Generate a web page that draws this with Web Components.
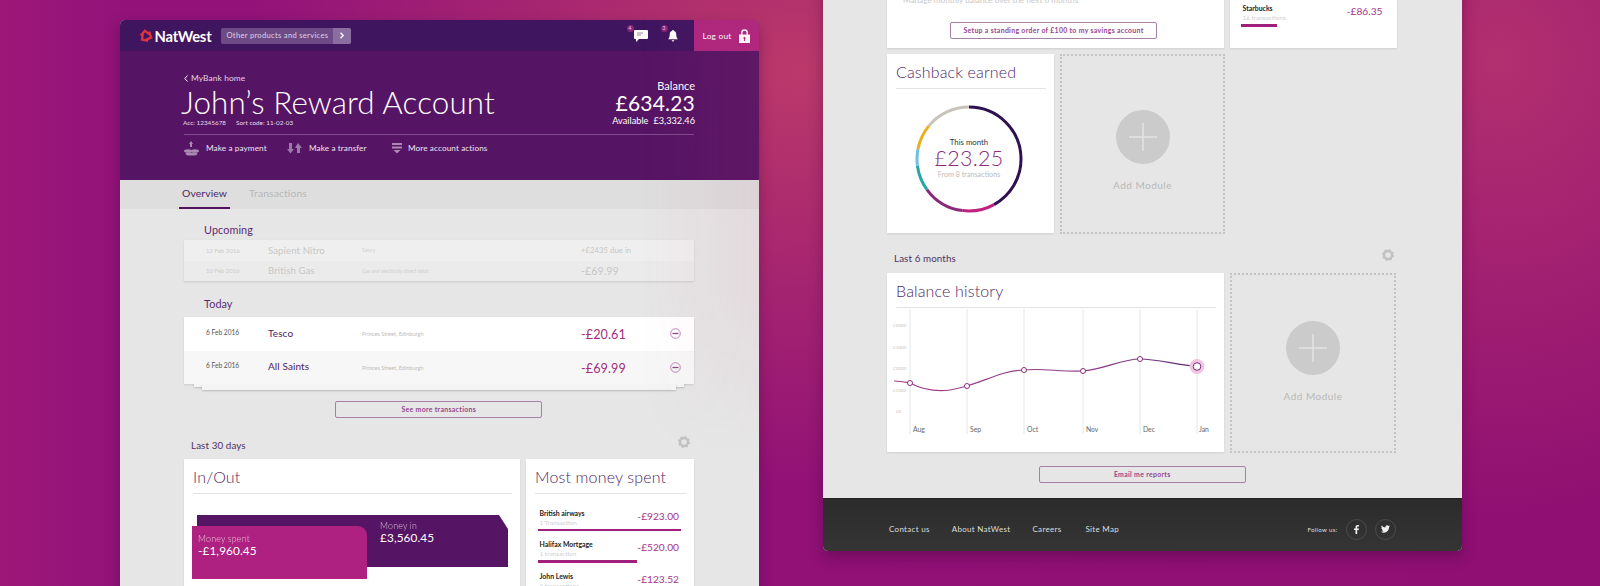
<!DOCTYPE html>
<html lang="en">
<head>
<meta charset="utf-8">
<title>NatWest reward account</title>
<style>
  html, body { margin: 0; height: 586px; overflow: hidden; }
  body {
    font-family: Lato, "Open Sans", sans-serif;
    background:
      radial-gradient(ellipse 560px 420px at 800px 70px, rgba(190,60,105,.92), rgba(190,60,105,0) 100%),
      radial-gradient(ellipse 420px 460px at 1500px 60px, rgba(190,58,110,.75), rgba(190,58,110,0) 100%),
      linear-gradient(90deg, #9c1778, #92127a 8%, #8f0f72 100%);
  }
  nw-stage > nw-window:first-child { margin-top: 20px; }
</style>
</head>
<body>

<nw-stage>
  <nw-window style="--w:639px">
    <nw-topbar></nw-topbar>
    <nw-account-header></nw-account-header>
    <nw-tabs></nw-tabs>
    <nw-content style="--pt:12px;--pr:65px">
      <nw-heading style="--ml:20px">Upcoming</nw-heading>
      <nw-tx-list muted>
        <nw-tx-row muted date="12 Feb 2016" name="Sapient Nitro" desc="Salary" amount="+£2435 due in" small></nw-tx-row>
        <nw-tx-row muted alt date="10 Feb 2016" name="British Gas" desc="Gas and electricity direct debit" amount="-£69.99"></nw-tx-row>
      </nw-tx-list>
      <nw-heading style="--ml:20px;--mt:14px">Today</nw-heading>
      <nw-tx-list stacked>
        <nw-tx-row date="6 Feb 2016" name="Tesco" desc="Princes Street, Edinburgh" amount="-£20.61" action></nw-tx-row>
        <nw-tx-row alt date="6 Feb 2016" name="All Saints" desc="Princes Street, Edinburgh" amount="-£69.99" action></nw-tx-row>
      </nw-tx-list>
      <nw-button style="--mt:17px">See more transactions</nw-button>
      <nw-heading settings small style="--ml:7px;--mt:21px;--mr:4px;--mb:8px">Last 30 days</nw-heading>
      <nw-row>
        <nw-card heading="In/Out" style="--w:336px;--h:160px"><nw-inout></nw-inout></nw-card>
        <nw-card heading="Most money spent" style="--w:167.5px;--h:160px">
          <nw-spend first name="British airways" count="1 Transaction" amount="-£923.00" pct="100"></nw-spend>
          <nw-spend name="Halifax Mortgage" count="1 transaction" amount="-£520.00" pct="69"></nw-spend>
          <nw-spend name="John Lewis" count="4 transactions" amount="-£123.52" pct="40"></nw-spend>
        </nw-card>
      </nw-row>
    </nw-content>
  </nw-window>

  <nw-window bottom style="--w:639px">
    <nw-content style="--pb:15px">
      <nw-row>
        <nw-card plain style="--w:337px;--h:88px">
          <nw-advice>Manage monthly balance over the next 6 months</nw-advice>
          <nw-button style="--mt:0;--bw:207px;--bh:17px;--shift:4px">Setup a standing order of £100 to my savings account</nw-button>
        </nw-card>
        <nw-card plain style="--w:167px;--h:88px">
          <nw-spend tail name="Starbucks" count="16 transactions" amount="-£86.35" pct="25"></nw-spend>
        </nw-card>
      </nw-row>
      <nw-row style="--mt:6px">
        <nw-card heading="Cashback earned" style="--w:167px;--h:179px"><nw-cashback></nw-cashback></nw-card>
        <nw-add-module style="--w:165px;--h:180px;--pt:54px"></nw-add-module>
      </nw-row>
      <nw-heading settings small style="--ml:7px;--mt:18px;--mr:4px;--mb:9px">Last 6 months</nw-heading>
      <nw-row>
        <nw-card heading="Balance history" style="--w:337px;--h:179px"><nw-balance-chart></nw-balance-chart></nw-card>
        <nw-add-module style="--w:166px;--h:180px;--pt:46px"></nw-add-module>
      </nw-row>
      <nw-button style="--mt:13px">Email me reports</nw-button>
    </nw-content>
    <nw-footer></nw-footer>
  </nw-window>
</nw-stage>

<script>
// tiny base class, most of these elements are just a static shadow root
class NwElement extends HTMLElement {
  constructor() {
    super();
    this.attachShadow({ mode: 'open' });
  }
  connectedCallback() {
    this.shadowRoot.innerHTML = this.render();
  }
  attr(name) {
    return this.getAttribute(name) || '';
  }
}

const GEAR = `<svg width="12" height="12" viewBox="0 0 24 24"><circle cx="12" cy="12" r="8" fill="none" stroke="#c2c2c2" stroke-width="5"/><circle cx="12" cy="12" r="10.5" fill="none" stroke="#c2c2c2" stroke-width="3" stroke-dasharray="4 4.25"/></svg>`;

class NwStage extends NwElement {
  render() {
    return `<style>
      :host { display: flex; height: 586px; overflow: hidden; padding-left: 119.5px; gap: 64px; box-sizing: border-box; }
    </style><slot></slot>`;
  }
}

class NwWindow extends NwElement {
  render() {
    const sheen = this.hasAttribute('bottom') ? '' : '<div class="sheen"></div>';
    return `<style>
      :host {
        display: block; position: relative; flex: none; width: var(--w); align-self: flex-start;
        border-radius: 5px; overflow: hidden; background: #e6e6e6;
        box-shadow: 0 6px 14px rgba(50,0,50,.35);
      }
      :host([bottom]) { align-self: flex-end; margin-bottom: 35px; border-radius: 0 0 5px 5px; }
      .sheen {
        position: absolute; inset: 0 0 0 auto; width: 120px; pointer-events: none;
        background: linear-gradient(180deg, rgba(200,70,110,.08), rgba(200,70,110,.07) 45%, rgba(200,70,110,0) 72%);
        -webkit-mask-image: linear-gradient(90deg, transparent, #000);
        mask-image: linear-gradient(90deg, transparent, #000);
      }
    </style><slot></slot>${sheen}`;
  }
}

class NwTopbar extends NwElement {
  render() {
    return `<style>
      :host { display: flex; align-items: center; height: 31px; background: #3f1560; color: #fff; position: relative; }
      .logo { display: flex; align-items: center; margin-left: 19px; gap: 2px; font-size: 14.8px; font-weight: 700; letter-spacing: -.2px; width: 82px; }
      .more { display: flex; height: 16px; width: 130px; border-radius: 2px; background: #6d4a86; font-size: 7.6px; letter-spacing: .3px; color: #dcd3e2; overflow: hidden; }
      .more span { flex: 1; padding-left: 6px; line-height: 15px; white-space: nowrap; }
      .more b { width: 18px; background: #8a6ea0; display: flex; align-items: center; justify-content: center; }
      .icons { margin-left: auto; display: flex; gap: 20px; margin-right: 16px; }
      .ic { position: relative; display: flex; }
      .ic i { position: absolute; left: -7px; top: -5px; width: 7px; height: 7px; line-height: 7px; border-radius: 50%; background: #8a2473; font: 5px Lato, sans-serif; text-align: center; color: #e9cfe4; }
      .logout { display: flex; align-items: center; width: 65px; height: 100%; box-sizing: border-box; padding-left: 9px; gap: 7px; background: #ae267f; font-size: 8.4px; letter-spacing: .2px; }
    </style>
    <div class="logo">
      <svg width="14" height="14" viewBox="-12 -12 24 24" fill="none" stroke="#e0343c" stroke-width="4">
        <path d="M-9 -1L-2 -9L6 -3"/><path d="M-9 -1L-2 -9L6 -3" transform="rotate(120)"/><path d="M-9 -1L-2 -9L6 -3" transform="rotate(240)"/>
      </svg>
      NatWest
    </div>
    <div class="more"><span>Other products and services</span><b><svg width="6" height="7" viewBox="0 0 6 7"><path d="M1.500 .8L4.200 3.500 1.500 6.200" fill="none" stroke="#fff" stroke-width="1.300"/></svg></b></div>
    <div class="icons">
      <div class="ic"><i>4</i><svg width="14" height="12" viewBox="0 0 14 12"><path d="M1 0h12a1 1 0 0 1 1 1v7a1 1 0 0 1-1 1H5l-3 3V9H1a1 1 0 0 1-1-1V1a1 1 0 0 1 1-1z" fill="#fff"/><path d="M3 3h6M3 5h4" stroke="#9a86a8" stroke-width="1"/></svg></div>
      <div class="ic"><i>3</i><svg width="10" height="12" viewBox="0 0 10 12"><path d="M5 0a1 1 0 0 1 1 1.100C8 1.600 8.300 3.400 8.300 5c0 2 .6 3.300 1.700 4.300H0C1.100 8.300 1.700 7 1.700 5c0-1.600.3-3.400 2.300-3.900A1 1 0 0 1 5 0z" fill="#fff"/><path d="M3.700 10.200h2.600a1.300 1.300 0 0 1-2.600 0z" fill="#fff"/></svg></div>
    </div>
    <div class="logout">Log out <svg width="11" height="14" viewBox="0 0 11 14"><path d="M2.800 6V3.700a2.700 2.700 0 0 1 5.400 0V6" fill="none" stroke="#fff" stroke-width="1.400"/><path d="M0 5.500h11V14H0z" fill="#fff"/><path d="M5.500 8a1 1 0 0 1 .5 1.900V12H5V9.900A1 1 0 0 1 5.500 8z" fill="#ae267f"/></svg></div>`;
  }
}

class NwAccountHeader extends NwElement {
  render() {
    return `<style>
      :host { display: block; height: 129px; box-sizing: border-box; padding: 21px 65px 0 64.5px; background: #561464; color: #fff; }
      .back { font-size: 8.4px; color: #e2d3e6; height: 13px; line-height: 13px; display: flex; align-items: center; gap: 3px; letter-spacing: .1px; }
      .main { display: flex; justify-content: space-between; height: 49px; }
      h1 { margin: -1px 0 0 -3px; font-size: 31.4px; font-weight: 300; line-height: 36px; letter-spacing: .1px; white-space: nowrap; }
      .acc { font-size: 6.3px; line-height: 9px; display: flex; gap: 10px; color: #eadfee; margin: -2px 0 0 -1px; letter-spacing: .04px; }
      .bal { text-align: right; margin: -6px -1.500px 0 0; }
      .bal div:nth-child(1) { font-size: 11px; line-height: 13px; }
      .bal div:nth-child(2) { font-size: 21px; line-height: 22px; letter-spacing: .2px; }
      .bal div:nth-child(3) { font-size: 9.2px; line-height: 12px; display: flex; justify-content: flex-end; gap: 5px; margin-top: 1px; }
      hr { border: 0; border-top: 1px solid #7c4d8a; margin: 0; }
      .actions { display: flex; align-items: center; height: 26px; font-size: 8.2px; color: #eee4f0; letter-spacing: .1px; }
      .actions span { display: flex; align-items: center; white-space: nowrap; }
      .actions svg { flex: none; }
    </style>
    <div class="back"><svg width="4" height="7" viewBox="0 0 4 7"><path d="M3.500 .5L.8 3.500 3.500 6.500" fill="none" stroke="#fff" stroke-width="1"/></svg> MyBank home</div>
    <div class="main">
      <div><h1>John’s Reward Account</h1><div class="acc"><span>Acc: 12345678</span><span>Sort code: 11-02-03</span></div></div>
      <div class="bal"><div>Balance</div><div>£634.23</div><div><span>Available</span><span>£3,332.46</span></div></div>
    </div>
    <hr>
    <div class="actions">
      <span style="width:103px"><svg width="15" height="15" viewBox="0 0 15 15" style="margin-right:7px" fill="#a98bb2"><path d="M7 0l2 3H8v3H6V3H5z"/><ellipse cx="4" cy="10" rx="4" ry="1.800"/><ellipse cx="11" cy="10" rx="4" ry="1.800"/><ellipse cx="7.500" cy="13" rx="6" ry="1.600"/></svg>Make a payment</span>
      <span style="width:105px"><svg width="15" height="11" viewBox="0 0 15 11" style="margin-right:7px" fill="#9a7aa6"><path d="M2 0h3v6h2L3.500 10.500 0 6h2z"/><path d="M11 0l4 5h-2v5h-3V5H8z"/></svg>Make a transfer</span>
      <span><svg width="10" height="11" viewBox="0 0 10 11" style="margin-right:6px" fill="#a98bb2"><path d="M0 0h10v2H0zM0 3.500h10v2H0zM1.500 7h7L5 10.500z"/></svg>More account actions</span>
    </div>`;
  }
}

class NwTabs extends NwElement {
  render() {
    return `<style>
      :host { display: flex; height: 29px; background: #dedede; padding-left: 59px; font-size: 10.4px; letter-spacing: .1px; }
      div { padding: 0 3.500px; line-height: 27px; height: 27px; }
      .on { color: #4c2560; border-bottom: 2px solid #50145e; width: 44px; }
      .off { color: #b7b7b7; margin-left: 16px; }
    </style><div class="on">Overview</div><div class="off">Transactions</div>`;
  }
}

class NwContent extends NwElement {
  render() {
    return `<style>
      :host { display: block; padding: var(--pt, 0) var(--pr, 64px) var(--pb, 0) 64.5px; }
    </style><slot></slot>`;
  }
}

class NwHeading extends NwElement {
  render() {
    return `<style>
      :host { display: flex; justify-content: space-between; align-items: center; height: 17px; margin: var(--mt, 0) var(--mr, 0) var(--mb, 0) var(--ml, 0); color: #5a2a70; font-size: 10.8px; letter-spacing: .1px; }
      :host([small]) { font-size: 9.8px; height: 12px; color: #50305f; }
      svg { margin-top: -6px; }
    </style><span><slot></slot></span>${this.hasAttribute('settings') ? GEAR : ''}`;
  }
}

class NwTxList extends NwElement {
  render() {
    return `<style>
      :host { display: block; margin-top: 2px; position: relative; box-shadow: 0 1px 2px rgba(0,0,0,.12); }
      :host([stacked]) { margin-top: 5px; margin-bottom: 5px; }
      .l1, .l2 { position: absolute; background: #f4f4f4; box-shadow: 0 1px 2px rgba(0,0,0,.2); z-index: -1; }
      .l1 { left: 10px; right: 10px; bottom: -3px; height: 6px; }
      .l2 { left: 18px; right: 18px; bottom: -6px; height: 6px; }
      .wrap { position: relative; isolation: isolate; }
    </style><div class="wrap">${this.hasAttribute('stacked') ? '<div class="l1"></div><div class="l2"></div>' : ''}<slot></slot></div>`;
  }
}

class NwTxRow extends NwElement {
  render() {
    const action = this.hasAttribute('action')
      ? `<svg width="11" height="11" viewBox="0 0 11 11"><circle cx="5.500" cy="5.500" r="4.800" fill="none" stroke="#b06aa4" stroke-width=".8"/><path d="M2.500 5.500h6" stroke="#8b4a88" stroke-width="1.300"/></svg>`
      : '';
    return `<style>
      :host { display: grid; grid-template-columns: 62px 94px 219px 89px 11px; align-items: center; height: 33.500px; padding-left: 22px; background: #fff; }
      :host([alt]) { background: #f7f7f7; }
      :host([muted]) { height: 20.5px; background: #efefef; }
      :host([muted][alt]) { background: #ebebeb; }
      .d { font-size: 6.6px; color: #555; margin-top: -4px; }
      .n { font-size: 10px; color: #4f2260; margin-top: -2px; letter-spacing: .1px; }
      .s { font-size: 5.6px; color: #bdbdbd; }
      .a { font-size: 12.6px; color: #a0307e; margin-top: 2px; letter-spacing: .1px; }
      :host([muted]) .d { font-size: 6px; color: #cbcbcb; margin: 0; }
      :host([muted]) .n { font-size: 9.6px; color: #c7c7c7; margin: 0; }
      :host([muted]) .s { font-size: 5px; color: #d0d0d0; }
      :host([muted]) .a { font-size: 10.6px; color: #c7c7c7; margin: 0; }
      :host([small]) .a { font-size: 7.6px; }
    </style>
    <div class="d">${this.attr('date')}</div><div class="n">${this.attr('name')}</div><div class="s">${this.attr('desc')}</div><div class="a">${this.attr('amount')}</div>${action}`;
  }
}

class NwButton extends NwElement {
  render() {
    return `<style>
      :host { display: flex; justify-content: center; margin-top: var(--mt, 0); padding-right: var(--shift, 0); }
      div { width: var(--bw, 207px); height: var(--bh, 17px); box-sizing: border-box; border: 1px solid #a680a6; border-radius: 2px; text-align: center; font-size: 6.9px; line-height: 14px; letter-spacing: .32px; font-weight: 700; color: #96458c; white-space: nowrap; }
    </style><div><slot></slot></div>`;
  }
}

class NwRow extends NwElement {
  render() {
    return `<style>
      :host { display: flex; gap: 6px; margin-top: var(--mt, 0); align-items: flex-start; }
    </style><slot></slot>`;
  }
}

class NwCard extends NwElement {
  render() {
    const heading = this.attr('heading');
    return `<style>
      :host { display: flex; flex-direction: column; flex: none; width: var(--w); height: var(--h); background: #fff; box-shadow: 0 1px 2px rgba(0,0,0,.1); box-sizing: border-box; overflow: hidden; }
      h2 { margin: 0 8px 0 9px; height: 35px; line-height: 36px; box-sizing: border-box; font-size: 16px; font-weight: 300; color: #4f1f66; letter-spacing: .15px; border-bottom: 1px solid #e3e3e3; white-space: nowrap; }
      .body { flex: 1; position: relative; }
    </style>${heading ? `<h2>${heading}</h2>` : ''}<div class="body"><slot></slot></div>`;
  }
}

class NwInout extends NwElement {
  render() {
    return `<style>
      :host { display: block; position: relative; height: 120px; color: #fff; }
      .in, .out { position: absolute; box-sizing: border-box; }
      .in { left: 13px; top: 21px; width: 311px; height: 52px; background: #561464; clip-path: polygon(0 0, 302px 0, 311px 14px, 311px 100%, 0 100%); padding: 5px 0 0 183px; }
      .out { left: 8px; top: 32px; width: 175px; height: 53px; background: #ae2180; border-radius: 0 9px 0 0; padding: 7px 0 0 6px; }
      .l { font-size: 8.8px; line-height: 11px; opacity: .7; font-weight: 300; letter-spacing: .2px; }
      .v { font-size: 11.8px; line-height: 14px; letter-spacing: .1px; }
    </style>
    <div class="in"><div class="l">Money in</div><div class="v">£3,560.45</div></div>
    <div class="out"><div class="l">Money spent</div><div class="v">-£1,960.45</div></div>`;
  }
}

class NwSpend extends NwElement {
  render() {
    return `<style>
      :host { display: block; height: 31.500px; box-sizing: border-box; margin: 0 12.500px 0 11.500px; padding-top: 8px; position: relative; }
      :host([first]) { margin-top: 6.500px; }
      :host([tail]) { padding-top: 44px; height: 80px; margin-left: 10.500px; }
      .top { display: flex; justify-content: space-between; padding: 0 2px; }
      .n { font-size: 6.9px; color: #222; font-weight: 700; line-height: 9px; }
      .c { font-size: 6.4px; color: #cfcfcf; line-height: 9px; }
      .a { font-size: 10.2px; color: #a8338a; margin-top: 1px; }
      .bar { height: 2.500px; background: #a0207a; margin-top: 2px; width: calc(var(--pct) * 1%); }
    </style>
    <div class="top"><div><div class="n">${this.attr('name')}</div><div class="c">${this.attr('count')}</div></div><div class="a">${this.attr('amount')}</div></div>
    <div class="bar" style="--pct:${this.attr('pct')}"></div>`;
  }
}

class NwAdvice extends NwElement {
  render() {
    return `<style>
      :host { display: block; margin: 35px 0 17px 0; padding-left: 16px; height: 10px; font-size: 8.200px; line-height: 10px; color: #c9c9c9; white-space: nowrap; }
    </style><slot></slot>`;
  }
}

class NwCashback extends NwElement {
  render() {
    const arcs = [
      ['#2e1150', 0, 42], ['#c0207f', 42, 52], ['#8a2a78', 52, 65],
      ['#2aa5a5', 65, 73], ['#6cc0e0', 73, 78], ['#e8b020', 78, 86], ['#c8c4bc', 86, 100]
    ].map(([color, from, to]) =>
      `<circle cx="56" cy="56" r="52" fill="none" stroke="${color}" stroke-width="3" pathLength="100" stroke-dasharray="${to - from} ${100 - to + from}" stroke-dashoffset="${-from}" transform="rotate(-90 56 56)"/>`
    ).join('');
    return `<style>
      :host { display: block; position: relative; width: 112px; height: 112px; margin: 13.500px 0 0 26px; }
      .t { position: absolute; inset: 0; display: flex; flex-direction: column; align-items: center; justify-content: center; white-space: nowrap; margin-top: -1px; }
      .a { font-size: 7.800px; color: #333; line-height: 11px; }
      .b { font-size: 21.500px; color: #8a2a80; font-weight: 300; line-height: 21px; letter-spacing: .3px; }
      .c { font-size: 7.200px; color: #bbb; line-height: 11px; }
    </style>
    <svg width="112" height="112" viewBox="0 0 112 112">${arcs}</svg>
    <div class="t"><div class="a">This month</div><div class="b">£23.25</div><div class="c">From 8 transactions</div></div>`;
  }
}

class NwBalanceChart extends NwElement {
  render() {
    const xs = [23, 80, 137, 196, 253, 310];
    const pts = [[23, 75], [80, 78], [137, 62], [196, 63], [253, 51]];
    const months = ['Aug', 'Sep', 'Oct', 'Nov', 'Dec', 'Jan'];
    const ys = [['£4000', 19], ['£3000', 40.5], ['£2000', 62], ['£1000', 84], ['£0', 105]];
    return `<style>
      :host { display: block; height: 144px; }
      svg { display: block; font-family: Lato, sans-serif; }
    </style>
    <svg width="337" height="144" viewBox="0 0 337 144">
      <defs><linearGradient id="ln" x1="0" x2="1" y1="0" y2="0"><stop offset="0" stop-color="#a8408e"/><stop offset=".7" stop-color="#8a3a86"/><stop offset="1" stop-color="#5a2a70"/></linearGradient></defs>
      ${xs.map(x => `<path d="M${x} 1V126" stroke="#e6e6e6" stroke-width="1"/>`).join('')}
      ${ys.map(([t, y]) => `<text x="${t === '£0' ? 9 : 6}" y="${y}" font-size="4.500" fill="#c5c5c5">${t}</text>`).join('')}
      ${months.map((m, i) => `<text x="${i === 5 ? xs[i] + 2 : xs[i] + 3}" y="124" font-size="6.800" fill="#666">${m}</text>`).join('')}
      <path d="M7 73C14 73 18 74 23 75C36 82 48 83 58 82.500C66 82 72 80 80 78C100 72 118 62 137 62C155 60 175 64 196 63C215 62 235 51 253 51C270 51 290 57 310 58.500" fill="none" stroke="url(#ln)" stroke-width="1.200"/>
      ${pts.map(([x, y]) => `<circle cx="${x}" cy="${y}" r="2.500" fill="#fff" stroke="#8a2a78" stroke-width="1"/>`).join('')}
      <circle cx="310" cy="58.500" r="7.500" fill="#f0c4e2"/>
      <circle cx="310" cy="58.500" r="3.800" fill="#fff" stroke="#7a2a78" stroke-width="1"/>
    </svg>`;
  }
}

class NwAddModule extends NwElement {
  render() {
    return `<style>
      :host { display: flex; flex-direction: column; align-items: center; flex: none; width: var(--w); height: var(--h); box-sizing: border-box; border: 2px dotted #c4c4c4; padding-top: var(--pt); color: #b8b8b8; font-size: 10px; letter-spacing: .5px; }
      .c { width: 54px; height: 54px; border-radius: 50%; background: #cbcbcb; display: flex; align-items: center; justify-content: center; margin-bottom: 15px; }
    </style>
    <div class="c"><svg width="28" height="28" viewBox="0 0 28 28"><path d="M14 0v28M0 14h28" stroke="#e4e4e4" stroke-width="1.500"/></svg></div>
    Add Module`;
  }
}

class NwFooter extends NwElement {
  render() {
    return `<style>
      :host { display: flex; align-items: center; height: 53px; box-sizing: border-box; padding: 8px 66px 0 66.5px; background: linear-gradient(#2b2b2b, #353535); border-top: 1px solid #222; color: #dedede; font-size: 8px; letter-spacing: .3px; }
      .links { display: flex; gap: 22px; white-space: nowrap; }
      .links span:last-child { margin-left: 2px; }
      .follow { margin-left: auto; display: flex; align-items: center; gap: 8px; font-size: 6.200px; }
      .c { width: 19px; height: 19px; border: 1px solid #4c4c4c; border-radius: 50%; display: flex; align-items: center; justify-content: center; }
    </style>
    <div class="links"><span>Contact us</span><span>About NatWest</span><span>Careers</span><span>Site Map</span></div>
    <div class="follow"><span>Follow us:</span>
      <div class="c"><svg width="5" height="9" viewBox="0 0 5 9"><path d="M1.500 9V5H0V3.500h1.500V2.200C1.500 .8 2.300 0 3.600 0H5v1.500H4c-.6 0-.8.3-.8.8v1.200H5L4.700 5H3.200v4z" fill="#eee"/></svg></div>
      <div class="c"><svg width="9" height="8" viewBox="0 0 24 20"><path d="M24 2.400c-.9.400-1.800.7-2.800.8 1-.6 1.800-1.600 2.200-2.700-1 .6-2 1-3.100 1.200A4.900 4.900 0 0 0 11.900 6.200C7.800 6 4.200 4.100 1.700.9a4.900 4.900 0 0 0 1.500 6.600c-.8 0-1.600-.2-2.200-.6 0 2.400 1.700 4.500 3.900 5-.7.2-1.500.2-2.200.1.600 2 2.400 3.400 4.600 3.400A9.900 9.900 0 0 1 0 17.400 13.900 13.900 0 0 0 21.500 5c1-.7 1.800-1.600 2.500-2.600z" fill="#eee"/></svg></div>
    </div>`;
  }
}

customElements.define('nw-stage', NwStage);
customElements.define('nw-window', NwWindow);
customElements.define('nw-topbar', NwTopbar);
customElements.define('nw-account-header', NwAccountHeader);
customElements.define('nw-tabs', NwTabs);
customElements.define('nw-content', NwContent);
customElements.define('nw-heading', NwHeading);
customElements.define('nw-tx-list', NwTxList);
customElements.define('nw-tx-row', NwTxRow);
customElements.define('nw-button', NwButton);
customElements.define('nw-row', NwRow);
customElements.define('nw-card', NwCard);
customElements.define('nw-inout', NwInout);
customElements.define('nw-spend', NwSpend);
customElements.define('nw-advice', NwAdvice);
customElements.define('nw-cashback', NwCashback);
customElements.define('nw-balance-chart', NwBalanceChart);
customElements.define('nw-add-module', NwAddModule);
customElements.define('nw-footer', NwFooter);
</script>
</body>
</html>
